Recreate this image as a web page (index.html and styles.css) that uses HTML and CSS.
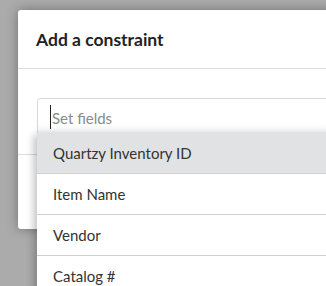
FILE: index.html
```html
<!DOCTYPE html>
<html>
<head>
<meta charset="utf-8">
<link rel="stylesheet" href="styles.css">
</head>
<body>
<div class="modal">
  <div class="modal-header">Add a constraint</div>
  <div class="modal-body">
    <div class="select">
      <div class="select-input"><span class="cursor"></span><span class="placeholder">Set fields</span></div>
      <div class="menu">
        <div class="option active">Quartzy Inventory ID</div>
        <div class="option">Item Name</div>
        <div class="option">Vendor</div>
        <div class="option">Catalog #</div>
      </div>
    </div>
  </div>
  <div class="modal-footer"></div>
</div>
</body>
</html>
```

FILE: styles.css
```css
html, body {
  margin: 0;
  padding: 0;
  height: 100%;
  overflow: hidden;
}
body {
  background: #ababab;
  font-family: Lato, "Open Sans", sans-serif;
  color: #333;
  padding-top: 10px;
  padding-left: 18px;
  box-sizing: border-box;
}
.modal {
  width: 420px;
  height: 219px;
  background: #fff;
  border-radius: 3px 0 0 3px;
  box-shadow: 0 0 12px rgba(0,0,0,0.35);
  display: flex;
  flex-direction: column;
}
.modal-header {
  height: 59px;
  box-sizing: border-box;
  padding-left: 18px;
  display: flex;
  align-items: center;
  font-size: 17.5px;
  font-weight: 700;
  color: #222;
  border-bottom: 1px solid #dcdcdc;
}
.modal-body {
  height: 86px;
  box-sizing: border-box;
  padding: 29px 0 0 19px;
  border-bottom: 1px solid #dcdcdc;
}
.select {
  position: relative;
}
.select-input {
  height: 34px;
  border: 1px solid #d8d8d8;
  border-bottom: none;
  border-radius: 4px 0 0 0;
  display: flex;
  align-items: center;
  padding-left: 12px;
  font-size: 15px;
  background: linear-gradient(#fff 70%, #f4f6f6);
}
.cursor {
  width: 1px;
  height: 24px;
  background: #222;
  margin-right: 1px;
  margin-top: 2px;
}
.placeholder {
  color: #8a8a8a;
  padding-top: 4px;
}
.menu {
  position: absolute;
  left: 0;
  top: 35px;
  width: 400px;
  background: #fff;
  box-shadow: -3px 2px 8px rgba(0,0,0,0.25);
}
.option {
  box-sizing: border-box;
  display: flex;
  align-items: center;
  padding-left: 16px;
  font-size: 15px;
  color: #333;
  border-bottom: 1px solid #d0d0d0;
  height: 41px;
}
.option.active {
  background: #e1e2e4;
}
```
